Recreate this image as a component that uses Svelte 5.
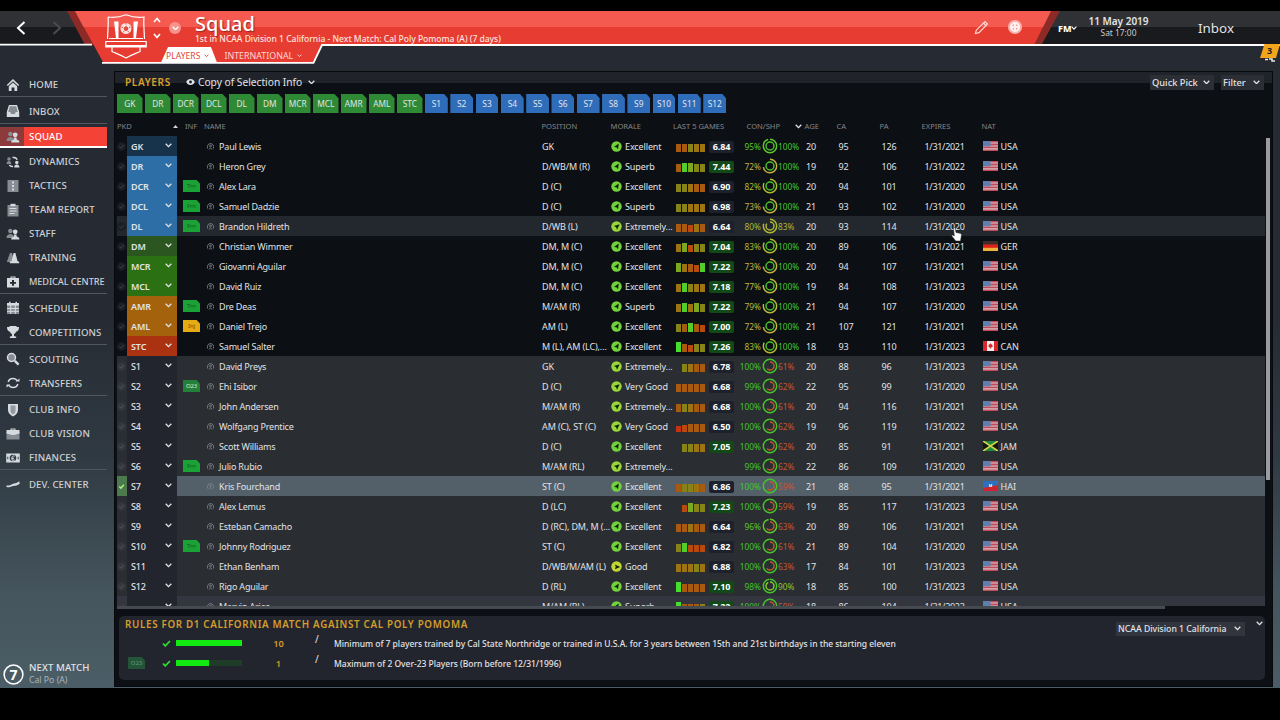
<script lang="ts">
  type Player = {
    pick: string; inf?: string; name: string; pos: string; morale: string;
    games: string; rating: string; con: number; shp: number;
    age: number; ca: number; pa: number; exp: number; nat: string;
  };

  const p = (
    pick: string, inf: string, name: string, pos: string, morale: string, games: string,
    rating: string, con: number, shp: number, age: number, ca: number, pa: number, exp: number, nat = 'USA'
  ): Player => ({ pick, inf, name, pos, morale, games, rating, con, shp, age, ca, pa, exp, nat });

  const players: Player[] = [
    p('GK', '', 'Paul Lewis', 'GK', 'Excellent', 'ooyaa', '6.84', 95, 100, 20, 95, 126, 2021),
    p('DR', '', 'Heron Grey', 'D/WB/M (R)', 'Superb', 'oglyy', '7.44', 72, 100, 19, 92, 106, 2022),
    p('DCR', 'Trn', 'Alex Lara', 'D (C)', 'Excellent', 'yyaoo', '6.90', 82, 100, 20, 94, 101, 2020),
    p('DCL', 'Frn', 'Samuel Dadzie', 'D (C)', 'Superb', 'yyaaa', '6.98', 73, 100, 21, 93, 102, 2020),
    p('DL', 'Frn', 'Brandon Hildreth', 'D/WB (L)', 'Extremely...', 'oorao', '6.64', 80, 83, 20, 93, 114, 2020),
    p('DM', '', 'Christian Wimmer', 'DM, M (C)', 'Excellent', 'alryy', '7.04', 83, 100, 20, 89, 106, 2021, 'GER'),
    p('MCR', '', 'Giovanni Aguilar', 'DM, M (C)', 'Excellent', 'laorg', '7.22', 73, 100, 20, 94, 107, 2021),
    p('MCL', '', 'David Ruiz', 'DM, M (C)', 'Excellent', 'agyaa', '7.18', 77, 100, 19, 84, 108, 2023),
    p('AMR', 'Trn', 'Dre Deas', 'M/AM (R)', 'Superb', 'agaly', '7.22', 79, 100, 21, 94, 107, 2020),
    p('AML', 'Inj', 'Daniel Trejo', 'AM (L)', 'Excellent', 'yogor', '7.00', 72, 100, 21, 107, 121, 2021),
    p('STC', '', 'Samuel Salter', 'M (L), AM (LC),...', 'Excellent', 'Goryy', '7.26', 83, 100, 18, 93, 110, 2023, 'CAN'),
    p('S1', '', 'David Preys', 'GK', 'Extremely...', '.yaoo', '6.78', 100, 61, 20, 88, 96, 2023),
    p('S2', 'O23', 'Ehi Isibor', 'D (C)', 'Very Good', 'ooooo', '6.68', 99, 62, 22, 95, 99, 2020),
    p('S3', '', 'John Andersen', 'M/AM (R)', 'Extremely...', 'oyaoo', '6.68', 100, 61, 20, 94, 116, 2021),
    p('S4', '', 'Wolfgang Prentice', 'AM (C), ST (C)', 'Very Good', 'Rrooo', '6.50', 100, 62, 19, 96, 119, 2022),
    p('S5', '', 'Scott Williams', 'D (C)', 'Excellent', '.yyaa', '7.05', 100, 62, 20, 85, 91, 2021, 'JAM'),
    p('S6', 'Frn', 'Julio Rubio', 'M/AM (RL)', 'Extremely...', '', '', 99, 62, 22, 86, 109, 2020),
    p('S7', '', 'Kris Fourchand', 'ST (C)', 'Excellent', 'oyyao', '6.86', 100, 59, 21, 88, 95, 2021, 'HAI'),
    p('S8', '', 'Alex Lemus', 'D (LC)', 'Excellent', '.rlyy', '7.23', 100, 59, 19, 85, 117, 2023),
    p('S9', '', 'Esteban Camacho', 'D (RC), DM, M (...', 'Excellent', 'ooaoo', '6.64', 96, 63, 20, 89, 106, 2021),
    p('S10', 'Trn', 'Johnny Rodriguez', 'ST (C)', 'Excellent', 'ygrrr', '6.82', 100, 61, 21, 89, 104, 2020),
    p('S11', '', 'Ethan Benham', 'D/WB/M/AM (L)', 'Good', 'aaaya', '6.88', 100, 63, 17, 84, 101, 2023),
    p('S12', '', 'Rigo Aguilar', 'D (RL)', 'Excellent', 'Goooo', '7.10', 98, 90, 18, 85, 100, 2023),
    p('', '', 'Marvin Arias', 'M/AM (RL)', 'Superb', 'Goooy', '7.22', 100, 59, 18, 86, 104, 2023),
  ];

  const games: Record<string, [string, number]> = {
    o: ['#a85a10', 8], a: ['#9c7512', 8], y: ['#868418', 8], l: ['#7aa81e', 9], r: ['#b84a10', 7],
    R: ['#c43414', 6], g: ['#4fcf28', 9], G: ['#45e02a', 10], '.': ['transparent', 8],
  };

  const starters = ['GK', 'DR', 'DCR', 'DCL', 'DL', 'DM', 'MCR', 'MCL', 'AMR', 'AML', 'STC'];
  const subs = Array.from({ length: 12 }, (_, i) => 'S' + (i + 1));

  const menu = [
    ['HOME'], ['INBOX'],
    ['SQUAD', 'DYNAMICS', 'TACTICS', 'TEAM REPORT', 'STAFF', 'TRAINING', 'MEDICAL CENTRE'],
    ['SCHEDULE', 'COMPETITIONS'], ['SCOUTING', 'TRANSFERS'],
    ['CLUB INFO', 'CLUB VISION', 'FINANCES'], ['DEV. CENTER'],
  ];

  const labels: [string, string][] = [
    ['PKD', 'sort'], ['INF', ''], ['NAME', ''], ['POSITION', ''], ['MORALE', ''], ['LAST 5 GAMES', ''],
    ['CON/SHP', 'mark'], ['AGE', ''], ['CA', ''], ['PA', ''], ['EXPIRES', ''], ['NAT', ''],
  ];

  function pkdClass(pick: string) {
    if (pick === 'GK') return 'gk';
    if (['DR', 'DCR', 'DCL', 'DL'].includes(pick)) return 'def';
    if (pick === 'DM') return 'dm';
    if (pick.startsWith('MC')) return 'mid';
    if (pick.startsWith('AM')) return 'att';
    if (pick === 'STC') return 'st';
    return 'sub';
  }

  function pct(v: number) {
    if (v >= 98) return '#45c42b';
    if (v >= 95) return '#5ec62b';
    if (v >= 90) return '#8bcb2a';
    if (v >= 80) return '#b2ba2f';
    if (v >= 76) return '#bebb3c';
    if (v >= 70) return '#c8b042';
    return '#c4582b';
  }

  const moraleColor = (m: string) =>
    m === 'Good' ? '#c3d733' : m === 'Very Good' || m === 'Extremely...' ? '#98d63a' : '#72d13c';
  const moraleTurn = (m: string) =>
    m === 'Good' ? 60 : m === 'Very Good' || m === 'Extremely...' ? 18 : 0;
  const arc = (r: number, v: number) => `${(2 * Math.PI * r * v) / 100} 100`;
</script>

{#snippet chev(size = 7)}
  <svg class="chev" width={size} height={size * 0.7} viewBox="0 0 10 7"><path d="M1 1.2 5 5.2 9 1.2" /></svg>
{/snippet}

{#snippet menuIcon(name: string)}
  <svg class="mi" width="14" height="14" viewBox="0 0 14 14">
    {#if name === 'HOME'}
      <path d="M7 1 .8 7l1 1L7 3.2 12.2 8l1-1z" /><path d="M2.8 8.2 7 4.5l4.2 3.7V13H8.4V9.5H5.6V13H2.8z" />
    {:else if name === 'INBOX'}
      <path class="dim" d="M3 1.5h8L13 8v4.5H1V8z" /><path d="M3 1h8l2.2 7v5H.8V8zM3.8 2.2 2.2 8h2l1 2h3.6l1-2h2l-1.6-5.8z" fill-rule="evenodd" />
    {:else if name === 'SQUAD' || name === 'STAFF'}
      <g class="dim"><circle cx="4.3" cy="4" r="2.2" /><path d="M.5 11c0-3 2-4 4-4s3 1 3 4z" /></g>
      <circle cx="9.2" cy="4.8" r="2.4" /><path d="M5.2 12.4c0-1.6 1-2.6 2.6-3V7.6h2.8v1.8c2 .5 2.8 1.4 2.8 3z" />
    {:else if name === 'DYNAMICS'}
      <g class="dim"><circle cx="3" cy="4" r="1.8" /><path d="M.6 9C.6 7 1.6 6 3 6s2.2 1 2.2 3z" /></g>
      <circle cx="10.8" cy="7.5" r="1.7" /><path d="M8.2 12.5c0-2 1-3 2.6-3s2.6 1 2.6 3z" />
      <path class="ln" d="M6.5 2.6c2.4-.6 4 .4 4.6 2.2M7 11.5c-2 .2-3-.4-3.6-1.6" />
    {:else if name === 'TACTICS'}
      <path class="dim" d="M1.5 1h11v12h-11z" /><path d="M6 2.5h2v2H6zm0 3.4h2v2.2H6zm0 3.5h2v2H6z" />
    {:else if name === 'TEAM REPORT'}
      <path class="dim" d="M1.5 2h11v11.5h-11z" /><path d="M4.5.8h5v2.4h-5z" /><path class="ln thin" d="M3.5 5.5h7M3.5 8h7M3.5 10.5h5" />
    {:else if name === 'TRAINING'}
      <path class="dim" d="M4 2h2l2.5 9H.8z" /><path d="M7.6 2h1.8l2.2 8.2 1.6.6v1.5H3.8v-1.5l1.7-.6z" />
    {:else if name === 'MEDICAL CENTRE'}
      <path fill-rule="evenodd" d="M4.5 3V1.5h5V3H13v9.5H1V3zM5.5 3h3v-.6h-3zM6 5v2H4v1.8h2v2h2v-2h2V7H8V5z" />
    {:else if name === 'SCHEDULE'}
      <path class="dim" d="M1 3.5h12V13H1z" /><path d="M1 2h12v2.5H1zM3 .8h1.5V3H3zm6.5 0H11V3H9.5z" /><path class="ln thin" d="M1 7.5h12M1 10.3h12M4.7 4v9M9.3 4v9" />
    {:else if name === 'COMPETITIONS'}
      <path d="M3.5 1h7v1H13c0 3-1 4.3-3 4.7C9.5 8 8.8 8.8 8 9v2l2.2.8V13H3.8v-1.2L6 11V9C5.2 8.8 4.500 8 4 6.700 2 6.300 1 5 1 2h2.500z" />
    {:else if name === 'SCOUTING'}
      <circle class="dim" cx="5.5" cy="5.5" r="4" /><circle class="ln" cx="5.5" cy="5.5" r="4" /><path class="ln fat" d="m8.8 8.8 3.8 3.8" />
    {:else if name === 'TRANSFERS'}
      <path class="ln" d="M2.2 6C2.8 3.6 4.7 2.5 7 2.5c2 0 3.5.9 4.3 2.5M11.8 8c-.6 2.4-2.5 3.5-4.8 3.5-2 0-3.5-.9-4.3-2.5" />
      <path d="M9.500 5.500h4V2.500zM4.500 8.500h-4v3z" />
    {:else if name === 'CLUB INFO'}
      <path d="M2 1h10v6c0 3-2 5-5 6.500C4 12 2 10 2 7z" /><path class="shade" d="M4.500 2.500h5V8c0 1.500-1 2.500-2.500 3.500C5.500 10.500 4.500 9.500 4.500 8z" />
    {:else if name === 'CLUB VISION'}
      <path class="dim" d="M.5 5h13v7.500H.5z" /><path fill-rule="evenodd" d="M4.500 3V1.500h5V3h4v3.500L8 8H6L.5 6.500V3zM5.500 3h3v-.6h-3z" />
    {:else if name === 'FINANCES'}
      <path d="M.2 2.500h13.600v9H.2z" /><circle class="hole" cx="7" cy="7" r="3.300" /><path class="ln thin" d="M8.600 5.200c-1.400-.8-2.500 0-2.500 1.300v2.700h2.700M5.300 7.200h2.700" /><path class="hole" d="M1.300 5.800h1v2.400h-1zm10.400 0h1v2.400h-1z" />
    {:else}
      <path d="M.5 8.500c2.500.4 4-.2 5.500-1.300 1.600-1 3-.6 4.300-1.200L13.500 4.300v2.800L11 8.300c-2 .9-3.300.2-5 1-1.800 1-3.500 1.200-5.500.6z" />
    {/if}
  </svg>
{/snippet}

{#snippet flag(nat: string)}
  <svg class="flag" width="15" height="10" viewBox="0 0 15 10">
    {#if nat === 'USA'}
      <rect width="15" height="10" fill="#d0a0ab" />
      <path d="M0 .7h15M0 3.500h15M0 6.300h15M0 9.300h15" stroke="#c04a58" stroke-width="1.300" />
      <rect width="7.500" height="5.300" fill="#5c7fae" />
    {:else if nat === 'GER'}
      <rect width="15" height="10" fill="#dd2218" /><rect width="15" height="3.400" fill="#3a2f2c" /><rect y="6.800" width="15" height="3.200" fill="#efb13c" />
    {:else if nat === 'CAN'}
      <rect width="15" height="10" fill="#d8282c" /><rect x="4" width="7" height="10" fill="#f1eeee" />
      <path d="m7.500 2 .8 1.400.9-.3-.2 1.500 1.200.2-1.500 1.800H6.300L4.800 4.800 6 4.600l-.2-1.500.9.300zM7.200 6h.6v2h-.6z" fill="#d8282c" />
    {:else if nat === 'JAM'}
      <rect width="15" height="10" fill="#1f8a3c" /><path d="M0 0v10l7.500-5zM15 0v10L7.500 5z" fill="#15180f" /><path d="m0 0 15 10M15 0 0 10" stroke="#d6d84a" stroke-width="1.600" />
    {:else}
      <path d="M0 0h15v5L0 7z" fill="#2e6fc0" /><path d="M0 7 15 4v6H0z" fill="#cf2330" /><rect x="6" y="3.200" width="3.200" height="2.600" fill="#dce6e6" /><path d="M7.200 3.200h.8v1.200h-.8z" fill="#2e6fc0" />
    {/if}
  </svg>
{/snippet}

<div class="screen">
  <div class="window">
    <header>
      <svg class="backdrop" width="1280" height="53" viewBox="0 11 1280 53">
        <rect y="11" width="1280" height="16" fill="#303134" />
        <rect y="27" width="1280" height="18" fill="#191a1d" />
        <path d="M67 11h40v34H85z" fill="#8b2a27" />
        <path d="M1045 11h15l-18 33h-15z" fill="#8b2a27" />
        <path d="M75 11h976l-17 34H322l-8.500 17H103z" fill="#e63c31" />
        <path d="M75 11h976l-8 16H83.500z" fill="#f45a50" />
        <path d="M0 44.700h92M102 62.800h211.500l8.500-17.800H1280" fill="none" stroke="#fff" stroke-width="1.800" />
        <path d="M161 62.500 168 47h43l6 15.500z" fill="#fff" />
      </svg>
      <div class="bar">
        <div class="history">
          <svg width="10" height="14" viewBox="0 0 10 14"><path d="M8.500 1 2 7l6.500 6" stroke="#fff" /></svg>
          <svg width="10" height="14" viewBox="0 0 10 14"><path d="M1.500 1 8 7l-6.500 6" stroke="#4a4b4e" /></svg>
        </div>
        <svg class="crest" width="42" height="46" viewBox="0 0 42 46">
          <path d="M3 3C9 4 15 3 21 .8 27 3 33 4 39 3c-.7 6 .2 13 .5 22M3 3c.7 6-.2 13-.5 22M7 33v4.500c4.500 2 9 3.500 14 6.500 5-3 9.500-4.500 14-6.500V33" class="o" />
          <path d="M9 7.500h4.500V24H11zM28.500 7.500H33L31 24h-2.500z" fill="#fff" />
          <circle cx="21" cy="14.500" r="5.500" fill="#fbe3e0" /><path d="m21 12.500 2 1.500-.8 2.300h-2.400L19 14zM21 9v1.500M25.500 13l-1.500.5M24 18.500l-1-1.300M18 18.500l1-1.300M16.500 13l1.500.5" stroke="#e04a40" stroke-width="1" fill="#e04a40" />
          <path d="M4 24.500h34M.8 27.500h40.400V33H.8z" class="o" /><path d="M1 31h40v2H1z" fill="#fff" />
        </svg>
        <div class="updown">
          <svg width="8" height="6" viewBox="0 0 8 6"><path d="M1 5 4 1.500 7 5" stroke="#fff" /></svg>
          <svg width="8" height="6" viewBox="0 0 8 6"><path d="M1 1l3 3.500L7 1" stroke="#fff" /></svg>
        </div>
        <span class="drop">{@render chev(7)}</span>
        <div class="heading">
          <h1>Squad</h1>
          <p>1st in NCAA Division 1 California - Next Match: Cal Poly Pomoma (A) (7 days)</p>
        </div>
        <svg class="pencil" width="15" height="15" viewBox="0 0 15 15"><path d="m1.500 13.500.8-3.300L11 1.500l2.500 2.500L5 12.700zM9.500 3l2.500 2.500" /></svg>
        <svg class="ball" width="16" height="16" viewBox="0 0 16 16">
          <circle cx="8" cy="8" r="7" fill="#f9b6b0" /><circle cx="8" cy="8" r="5" fill="#fff0ee" />
          <g fill="#ee8a82"><circle cx="6.300" cy="6.300" r=".8" /><circle cx="9.700" cy="6.300" r=".8" /><circle cx="6.300" cy="9.700" r=".8" /><circle cx="9.700" cy="9.700" r=".8" /></g>
        </svg>
        <span class="fm">FM{@render chev(6)}</span>
        <div class="date"><b>11 May 2019</b><span>Sat 17:00</span></div>
        <span class="inbox">Inbox</span>
      </div>
      <nav class="tabs">
        <span class="on">PLAYERS {@render chev(5)}</span>
        <span>INTERNATIONAL {@render chev(5)}</span>
      </nav>
      <div class="alert"><svg width="20" height="18" viewBox="0 0 20 18"><path d="M4.500 0H20l-4 14H0z" fill="#f3a51c" /><path d="M5 15.500h3M9 15h3v2h3" stroke="#e6e6e6" stroke-width="1.500" fill="none" /></svg><b>3</b></div>
    </header>

    <div class="body">
      <aside>
        {#each menu as group}
          <ul>
            {#each group as item}
              <li class:active={item === 'SQUAD'} class:tight={item === 'MEDICAL CENTRE'}>{@render menuIcon(item)}<span>{item}</span></li>
            {/each}
          </ul>
        {/each}
        <div class="next">
          <svg width="21" height="21" viewBox="0 0 21 21"><circle cx="10.500" cy="10.500" r="9.400" /><text x="10.500" y="15.800">7</text></svg>
          <div><b>NEXT MATCH</b><span>Cal Po (A)</span></div>
        </div>
      </aside>

      <main>
        <div class="title">
          <h2>PLAYERS</h2>
          <svg width="9" height="6" viewBox="0 0 10 7"><path fill-rule="evenodd" d="M5 0c2.300 0 4 1.500 5 3.500C9 5.500 7.300 7 5 7S1 5.500 0 3.500C1 1.500 2.700 0 5 0zm0 1.800a1.700 1.700 0 1 0 0 3.400 1.700 1.700 0 0 0 0-3.400z" fill="#e4e5e8" /></svg>
          <span class="view">Copy of Selection Info</span>
          {@render chev(7)}
          <button class="quick">Quick Pick{@render chev(7)}</button>
          <button class="filter">Filter{@render chev(7)}</button>
        </div>

        <div class="slots">
          {#each starters as s}<span>{s}</span>{/each}
          {#each subs as s}<span class="blue">{s}</span>{/each}
        </div>

        <div class="labels">
          {#each labels as [text, mark]}
            <span>{text}
              {#if mark === 'sort'}<svg class="up" width="5" height="3" viewBox="0 0 5 3"><path d="M0 3 2.500 0 5 3z" fill="#d5d6d8" /></svg>{/if}
              {#if mark === 'mark'}{@render chev(7)}{/if}
            </span>
          {/each}
        </div>

        <div class="scroller">
          <div class="list">
            {#each players as pl, i}
              <div class="row" class:bench={i > 10} class:hover={pl.pick === 'DL'} class:picked={pl.pick === 'S7'} class:extra={i === 23}>
                <span class="tick"><svg width="9" height="9" viewBox="0 0 9 9"><circle cx="4.500" cy="4.500" r="4.300" /><path d="m2.300 4.500 1.600 1.700 2.900-3.400" /></svg></span>
                <span class="pkd {pkdClass(pl.pick)}">{pl.pick}{@render chev(7)}</span>
                <span class="inf">{#if pl.inf}<i class={pl.inf.toLowerCase()}>{pl.inf}</i>{/if}</span>
                <span class="name"><svg width="7" height="7" viewBox="0 0 7 7"><path d="M.6 5.500C-.2 2.500 1.200.6 3.500.6s3.700 1.900 2.900 4.900" /><circle cx="3.500" cy="3" r=".9" /><path d="M2.200 6.500c0-2 2.600-2 2.600 0" /></svg><em>{pl.name}</em></span>
                <span class="text">{pl.pos}</span>
                <span class="morale">
                  <svg width="11" height="11" viewBox="0 0 11 11"><circle cx="5.500" cy="5.500" r="5.200" fill={moraleColor(pl.morale)} /><path transform="rotate({moraleTurn(pl.morale)} 5.500 5.500)" d="M7.800 2.500 7 8.300 5.400 6.300 2.900 5.900z" fill="#10240c" /></svg>
                  <em>{pl.morale}</em>
                </span>
                <span class="games">
                  {#each pl.games as g}<i style="height:{games[g][1]}px;background:{games[g][0]}"></i>{/each}
                </span>
                <span class="rating" class:high={+pl.rating >= 7} class:none={!pl.rating}>{pl.rating}</span>
                <span class="con" style="color:{pct(pl.con)}">{pl.con}%</span>
                <svg class="ring" width="16" height="16" viewBox="0 0 16 16">
                  <g transform="rotate(-90 8 8)">
                    <circle cx="8" cy="8" r="6.700" stroke={pct(pl.con)} stroke-dasharray={arc(6.7, pl.con)} />
                    <circle cx="8" cy="8" r="4" stroke={pct(pl.shp)} stroke-dasharray={arc(4, pl.shp)} />
                  </g>
                </svg>
                <span class="shp" style="color:{pct(pl.shp)}">{pl.shp}%</span>
                <span class="text">{pl.age}</span>
                <span class="text">{pl.ca}</span>
                <span class="text">{pl.pa}</span>
                <span class="text expires">1/31/{pl.exp}</span>
                <span class="nat">{@render flag(pl.nat)}<em>{pl.nat}</em></span>
              </div>
            {/each}
          </div>
          <div class="vbar"></div>
        </div>
        <div class="hbar"></div>

        <section class="rules">
          <div class="rules-head">
            <h3>RULES FOR D1 CALIFORNIA MATCH AGAINST CAL POLY POMOMA</h3>
            <button>NCAA Division 1 California{@render chev(7)}</button>
            {@render chev(7)}
          </div>
          <div class="rule">
            <span></span>
            <svg width="9" height="7" viewBox="0 0 9 7"><path d="m1 3.500 2.300 2.400L8 1" /></svg>
            <div class="meter"><i style="width:100%"></i></div>
            <b>10</b><em>/</em>
            <p>Minimum of 7 players trained by Cal State Northridge or trained in U.S.A. for 3 years between 15th and 21st birthdays in the starting eleven</p>
          </div>
          <div class="rule">
            <span class="tag">O23</span>
            <svg width="9" height="7" viewBox="0 0 9 7"><path d="m1 3.500 2.300 2.400L8 1" /></svg>
            <div class="meter"><i style="width:50%"></i></div>
            <b>1</b><em>/</em>
            <p>Maximum of 2 Over-23 Players (Born before 12/31/1996)</p>
          </div>
        </section>
      </main>
    </div>
    <svg class="cursor" width="11" height="15" viewBox="0 0 11 15"><path d="M2.500 1c1-.8 1.700 0 1.800.8L5 5.500l4 .8c1.200.3 1.600 1 1.400 2.200L9.500 14H4.800L1 9.300c-.6-.9.2-1.500 1-1.100l1.300.8z" fill="#fff" stroke="#222" stroke-width=".5" /></svg>
  </div>
</div>

<style>
  :global(body) { background: #000; overflow: hidden; }

  .screen {
    box-sizing: border-box; width: 1280px; height: 720px; padding: 11px 0 32px; background: #000;
    font-family: "Noto Sans", "Open Sans", sans-serif; color: #e2e3e6; overflow: hidden;
  }
  .window {
    position: relative; height: 677px; display: flex; flex-direction: column;
    background: linear-gradient(#262a32 0, #262b33 45%, #303a43 66%, #45555d 86%, #4b5d66 100%);
  }
  h1, h2, h3, p, ul { margin: 0; padding: 0; list-style: none; font-weight: 500; }
  em { font-style: normal; }
  svg { flex: none; display: block; }
  .chev path { fill: none; stroke: currentColor; stroke-width: 1.9; }
  button {
    display: flex; align-items: center; justify-content: space-between; box-sizing: border-box;
    border: 0; padding: 0 4px 0 2px; color: #e2e3e6; font: 500 9.3px "Noto Sans", sans-serif; background: #2b2e34;
    white-space: nowrap;
  }

  header { position: relative; height: 53px; flex: none; }
  .backdrop { position: absolute; left: 0; top: 0; }
  .bar { position: relative; display: flex; height: 34px; }
  .bar > * { flex: none; }
  .history { display: flex; gap: 26px; width: 105px; padding: 10px 0 0 16px; box-sizing: border-box; }
  .history path, .updown path { fill: none; stroke-width: 2; }
  .crest { margin-top: 3px; }
  .crest .o { fill: none; stroke: #fff; stroke-width: 1.2; }
  .updown { display: flex; flex-direction: column; gap: 10px; margin: 6px 0 0 6px; }
  .updown path { stroke-width: 1.6; }
  .drop {
    display: flex; align-items: center; justify-content: center; width: 12px; height: 12px;
    margin: 11px 0 0 8px; border-radius: 50%; background: #f7938b; color: #fff;
  }
  .heading { width: 779px; margin-left: 14px; }
  h1 { font-size: 20px; line-height: 21px; margin-top: 2px; color: #fff; text-shadow: 1px 1px 1px #8b2a27; }
  .heading p { font-size: 8.5px; line-height: 10px; color: #ffe3df; white-space: nowrap; }
  .pencil { margin: 9px 0 0; }
  .pencil path { fill: none; stroke: #ffdcd6; stroke-width: 1.2; }
  .ball { margin: 8px 0 0 18px; }
  .fm { display: flex; align-items: center; height: 32px; width: 29px; margin: 1px 0 0 35px; font-size: 9px; font-weight: 800; color: #fff; }
  .date { display: flex; flex-direction: column; align-items: center; width: 63px; margin-top: 4px; white-space: nowrap; }
  .date b { font-size: 10px; line-height: 13px; font-weight: 600; }
  .date span { font-size: 8.4px; line-height: 10px; color: #c9cacd; }
  .inbox { margin: 7px 0 0 48px; font-size: 13.4px; line-height: 20px; }
  .tabs { position: relative; display: flex; padding-left: 166px; gap: 15px; }
  .tabs span { display: flex; align-items: center; gap: 4px; height: 21px; font-size: 8.9px; color: #ffd6d1; }
  .tabs .on { color: #e0473c; font-size: 8.6px; }
  .alert { position: absolute; right: 0; top: 33px; }
  .alert b { position: absolute; left: 7px; top: 1px; font-size: 9px; line-height: 12px; color: #222; }

  .body { display: flex; flex: 1; min-height: 0; }
  aside { display: flex; flex-direction: column; width: 114px; padding-top: 8px; box-sizing: border-box; }
  aside ul { width: 107px; border-bottom: 1px solid #50565d; margin-bottom: 1.67px; }
  aside ul:nth-of-type(7) { border: 0; }
  aside li { display: flex; align-items: center; gap: 9px; height: 24px; padding: 1px 0 0 6px; box-sizing: border-box; font-size: 9.6px; color: #cdd0d4; white-space: nowrap; letter-spacing: .1px; }
  aside li.tight { font-size: 9.2px; letter-spacing: -.1px; }
  aside li.active {
    height: 21px; margin: 2px 0 1px; padding-top: 0; border-bottom: 2px solid #fff; color: #fff;
    background: linear-gradient(90deg, #8c3a3b 24px, #f44236 24px);
  }
  .mi { fill: #d6dbe0; }
  .mi .dim { fill: #868c94; }
  .mi .shade { fill: #9399a1; }
  .mi .hole { fill: #343e46; }
  .mi .ln { fill: none; stroke: #d6dbe0; stroke-width: 1.5; }
  .mi .thin { stroke-width: 1; }
  .mi .fat { stroke-width: 2.4; }
  .next { display: flex; gap: 5px; margin: auto 0 2px 3px; align-items: center; }
  .next circle { fill: none; stroke: #fff; stroke-width: 1.5; }
  .next text { fill: #fff; font-size: 14px; font-weight: 700; text-anchor: middle; }
  .next b { display: block; font-size: 9.6px; line-height: 12px; font-weight: 500; white-space: nowrap; letter-spacing: .1px; }
  .next span { display: block; font-size: 8.7px; line-height: 12px; color: #aab3b9; }

  main {
    display: flex; flex-direction: column; box-sizing: border-box; width: 1159px; height: 616px; margin-top: 7px;
    border: 1px solid #07090c; padding-left: 2px; background: linear-gradient(#20232a 11px, #0c0f14 11px);
  }
  .title { display: flex; align-items: center; height: 20px; padding-left: 8px; }
  h2 { width: 61px; font-size: 10px; font-weight: 600; letter-spacing: .65px; color: #d9a02b; }
  .view { margin: 0 6px 0 3px; font-size: 10.2px; }
  .quick { width: 64px; height: 15px; margin-left: auto; }
  .filter { width: 43px; height: 15px; margin: 0 8px 0 7px; }
  .slots { display: flex; margin-top: 2px; height: 19px; }
  .slots span {
    width: 25.5px; margin-right: 2.5px; font-size: 8.3px; line-height: 19px; text-align: center;
    background: #2e8a34; clip-path: polygon(0 0, 84% 0, 100% 22%, 100% 100%, 0 100%);
  }
  .slots .blue { width: 22.8px; background: #2f6dbb; }

  .labels {
    display: grid; grid-template-columns: 68px 19px 337.5px 69px 62.5px 73.5px 58px 32px 43px 42px 60px 1fr;
    height: 23px; font-size: 7.6px; line-height: 27px; color: #83868b; white-space: nowrap;
  }
  .labels span { display: flex; align-items: center; height: 27px; }
  .labels .up { margin-left: 41px; }
  .labels .chev { margin-left: 15px; color: #e4e5e8; }

  .scroller { display: flex; height: 470px; overflow: hidden; }
  .list { width: 1148px; }
  .row {
    display: grid; align-items: center; height: 20px; white-space: nowrap;
    grid-template-columns: 10px 50px 27px 338px 69px 65px 33px 25px 27px 16px 29px 32.5px 43px 43px 58px 1fr;
    font-size: 9px; line-height: 20px; letter-spacing: -.12px;
  }
  .row em, .text, .con, .shp { padding-top: 1px; line-height: 19px; }
  .bench { background: #2a2d31; }
  .hover { background: #23272e; }
  .picked { background: #53606a; }
  .extra { background: #33363f; }
  .tick svg { fill: #1b1e23; stroke: none; }
  .tick path { fill: none; stroke: #3c4046; }
  .bench .tick svg { fill: #34373c; }
  .bench .tick path { stroke: #50545a; }
  .picked .tick { height: 20px; background: #4d7a4c; display: flex; align-items: center; }
  .picked .tick svg { fill: none; }
  .picked .tick path { stroke: #b5f08a; stroke-width: 1.4; }
  .pkd { display: flex; align-items: center; box-sizing: border-box; height: 20px; padding: 1px 5px 0 4px; font-weight: 600; }
  .pkd .chev, .pkd :global(.chev) { margin: -2px 0 0 auto; }
  .gk { background: #17324b; }
  .def { background: #2d6ea6; }
  .dm { background: #2c561f; }
  .mid { background: #2b7013; }
  .att { background: #a3620b; }
  .st { background: #aa3210; }
  .sub { background: #22252e; font-weight: 500; }
  .inf { padding-left: 6px; }
  .inf i, .tag {
    display: block; width: 17px; height: 12px; font: 6px/12px "Noto Sans", sans-serif; text-align: center; color: #0b5a1c;
    background: #1aa236; clip-path: polygon(0 0, 80% 0, 100% 30%, 100% 100%, 0 100%);
  }
  .inf .inj { background: #e5aa14; color: #6d4d00; }
  .inf .o23 { background: #23803b; color: #cfe9d3; }
  .name { display: flex; align-items: center; gap: 5px; padding-left: 3px; letter-spacing: -.18px; }
  .name svg { fill: none; stroke: #7d8188; stroke-width: .9; }
  .morale { display: flex; align-items: center; gap: 3px; }
  .games { display: flex; align-items: flex-end; gap: 1px; height: 11px; }
  .games i { width: 5px; }
  .rating {
    height: 12px; margin-top: 1px; border-radius: 2px; text-align: center; color: #fff; background: #1c212b;
    font-size: 9px; font-weight: 700; line-height: 12px;
  }
  .high { background: #124a17; }
  .none { background: none; }
  .con, .shp { font-size: 8.3px; letter-spacing: 0; }
  .con { text-align: right; }
  .ring { margin-left: 1px; }
  .ring circle { fill: none; stroke-width: 1.45; }
  .shp { padding-left: 1px; }
  .expires { letter-spacing: -.3px; }
  .nat { display: flex; align-items: center; gap: 3px; letter-spacing: 0; }
  .vbar { width: 4px; height: 342px; margin: 2px 0 0 1px; background: #9b9ca1; }
  .hbar { width: 1048px; height: 3px; background: #454a50; }

  .rules { width: 1146px; height: 64px; margin: 7px 0 0 2px; border-radius: 5px; background: #22252d; }
  .rules-head { display: flex; align-items: center; height: 17px; padding-left: 6px; }
  h3 { flex: 1; font-size: 9.8px; font-weight: 600; letter-spacing: .68px; color: #d29d2e; }
  .rules-head button { width: 129px; height: 14px; margin: 8px 11px 0 0; background: #32353d; font-size: 8.7px; }
  .rules-head > :global(.chev) { margin: -2px 2px 0 0; }
  .rule { display: grid; grid-template-columns: 34px 14px 66px 73px 19px 1fr; align-items: center; height: 20px; padding-left: 9px; font-size: 9.2px; }
  .rule p { font-size: 8.5px; letter-spacing: -.02px; white-space: nowrap; }
  .rule em { padding-left: 0; }
  .rule svg path { fill: none; stroke: #2ee02e; stroke-width: 1.7; }
  .meter { height: 6px; background: #1f3c29; }
  .meter i { display: block; height: 6px; background: #12ea12; }
  .rule b { text-align: center; color: #d29d2e; font-weight: 600; }
  .rule em { font-size: 10px; margin-top: -8px; }
  .tag { background: #24553a; color: #5f9a72; }
  .cursor { position: absolute; left: 951px; top: 216px; }
</style>
